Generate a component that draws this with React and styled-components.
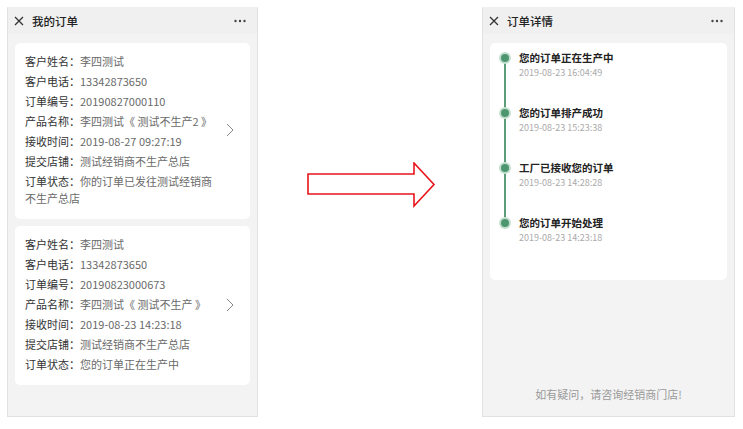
import React from "react";
import styled, { createGlobalStyle } from "styled-components";

const GlobalStyle = createGlobalStyle`
    body { margin:0; background:#fff; font-family:"Noto Sans CJK SC", "Noto Sans", sans-serif; }
`;

const orders = [
    {
        name: "李四测试",
        phone: "13342873650",
        no: "20190827000110",
        product: "李四测试《 测试不生产2 》",
        time: "2019-08-27 09:27:19",
        shop: "测试经销商不生产总店",
        status: "你的订单已发往测试经销商不生产总店",
    },
    {
        name: "李四测试",
        phone: "13342873650",
        no: "20190823000673",
        product: "李四测试《 测试不生产 》",
        time: "2019-08-23 14:23:18",
        shop: "测试经销商不生产总店",
        status: "您的订单正在生产中",
    },
];

const steps = [
    { title: "您的订单正在生产中", date: "2019-08-23 16:04:49" },
    { title: "您的订单排产成功", date: "2019-08-23 15:23:38" },
    { title: "工厂已接收您的订单", date: "2019-08-23 14:28:28" },
    { title: "您的订单开始处理", date: "2019-08-23 14:23:18" },
];

const CloseIcon = () => (
    <svg width="10" height="10" viewBox="0 0 10 10">
        <path d="M1 1 L9 9 M9 1 L1 9" stroke="#333" strokeWidth="1.3" fill="none" />
    </svg>
);

const MoreIcon = () => (
    <svg width="12" height="4" viewBox="0 0 12 4">
        <circle cx="1.5" cy="2" r="1.2" fill="#444" />
        <circle cx="6" cy="2" r="1.2" fill="#444" />
        <circle cx="10.5" cy="2" r="1.2" fill="#444" />
    </svg>
);

const Chevron = () => (
    <svg width="8" height="14" viewBox="0 0 8 14">
        <path d="M1 1 L7 7 L1 13" stroke="#888" strokeWidth="1" fill="none" />
    </svg>
);

const Header = ({ title }) => (
    <Bar>
        <CloseIcon />
        <BarTitle>{title}</BarTitle>
        <MoreIcon />
    </Bar>
);

const App = () => {
    return (
        <>
            <GlobalStyle />
            <Page>
                <Phone w={251}>
                    <Header title="我的订单" />
                    <List>
                        {orders.map((o) => (
                            <OrderCard key={o.no}>
                                <Info>
                                    <Row><Label>客户姓名：</Label>{o.name}</Row>
                                    <Row><Label>客户电话：</Label>{o.phone}</Row>
                                    <Row><Label>订单编号：</Label>{o.no}</Row>
                                    <Row><Label>产品名称：</Label>{o.product}</Row>
                                    <Row><Label>接收时间：</Label>{o.time}</Row>
                                    <Row><Label>提交店铺：</Label>{o.shop}</Row>
                                    <Row><Label>订单状态：</Label>{o.status}</Row>
                                </Info>
                                <Chevron />
                            </OrderCard>
                        ))}
                    </List>
                </Phone>

                <ArrowBox>
                    <svg width="130" height="46" viewBox="0 0 130 46">
                        <polygon
                            points="1,12 107,12 107,1 127,22.5 107,44 107,32 1,32"
                            fill="#fff"
                            stroke="#e8141b"
                            strokeWidth="1.6"
                        />
                    </svg>
                </ArrowBox>

                <Phone w={253}>
                    <Header title="订单详情" />
                    <List>
                        <TimelineCard>
                            {steps.map((s, i) => (
                                <Step key={s.date} last={i === steps.length - 1}>
                                    <Dot />
                                    <StepTitle>{s.title}</StepTitle>
                                    <StepDate>{s.date}</StepDate>
                                </Step>
                            ))}
                        </TimelineCard>
                    </List>
                    <Footer>如有疑问，请咨询经销商门店!</Footer>
                </Phone>
            </Page>
        </>
    );
};

const Page = styled.div`
    display:flex; align-items:flex-start; padding:7px 0 0 7px;
`;

const Phone = styled.div`
    display:flex; flex-direction:column; box-sizing:border-box;
    width:${props => props.w}px; height:410px;
    background:#f3f3f3; border:1px solid #e2e2e2; border-top-color:#f0f0f0;
`;

const Bar = styled.div`
    display:flex; align-items:center; height:26px; padding:0 11px 0 6px;
    background:#f0f0f0; color:#222;
    svg {flex:none;}
`;

const BarTitle = styled.span`
    flex:1; margin-left:8px; font-size:11.5px; font-weight:500; line-height:14px;
`;

const List = styled.div`
    display:flex; flex-direction:column; gap:7px; padding:9px 7px 0;
`;

const OrderCard = styled.div`
    display:flex; align-items:center; padding:10px 16px 12px 10px;
    background:#fff; border-radius:5px;
    svg {flex:none; margin-left:auto;}
`;

const Info = styled.div`
    flex:none; width:192px; display:flex; flex-direction:column; gap:3px;
`;

const Row = styled.div`
    font-size:11px; line-height:17px; color:#6a6a6a;
`;

const Label = styled.span`
    color:#333;
`;

const ArrowBox = styled.div`
    width:224px; padding:155px 0 0 49px; box-sizing:border-box;
    svg {display:block;}
`;

const TimelineCard = styled.div`
    display:flex; flex-direction:column; height:237px; box-sizing:border-box;
    padding:8px 10px 0 29px; background:#fff; border-radius:5px;
`;

const Step = styled.div`
    position:relative; height:55px;
    &::before {
        content:""; display:${props => props.last ? "none" : "block"};
        position:absolute; left:-15px; top:7px; width:2px; height:55px; background:#5c9c78;
    }
`;

const Dot = styled.span`
    position:absolute; left:-18px; top:3px; width:8px; height:8px; border-radius:50%;
    background:#4e9670; box-shadow:0 0 0 2px #c3e0cf;
`;

const StepTitle = styled.div`
    font-size:10.5px; font-weight:700; line-height:14px; color:#222;
`;

const StepDate = styled.div`
    margin-top:2px; font-size:9px; line-height:12px; color:#aaa;
`;

const Footer = styled.div`
    margin-top:auto; padding-bottom:14px; text-align:center;
    font-size:11px; line-height:16px; color:#9a9a9a;
`;

export default App;
